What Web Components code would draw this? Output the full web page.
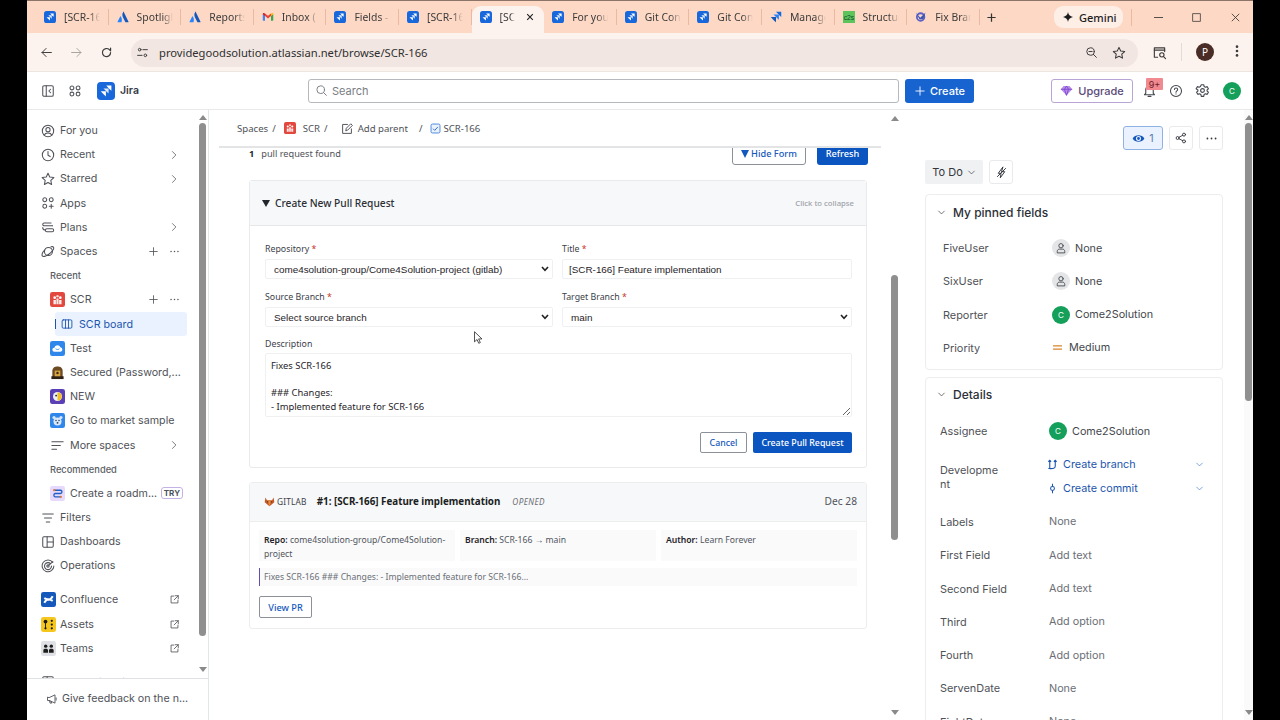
<!DOCTYPE html>
<html lang="en">
<head>
<meta charset="utf-8">
<title>SCR-166</title>
<style>
  html, body { margin: 0; background: #000; overflow: hidden; }
</style>
</head>
<body>
<app-shell>
  <tab-strip>
    <browser-tab icon="jira">[SCR-166</browser-tab>
    <browser-tab icon="atlassian">Spotlight</browser-tab>
    <browser-tab icon="atlassian">Reports</browser-tab>
    <browser-tab icon="gmail">Inbox (</browser-tab>
    <browser-tab icon="jira">Fields -</browser-tab>
    <browser-tab icon="jira">[SCR-166</browser-tab>
    <browser-tab icon="jira" active>[SCR-166</browser-tab>
    <browser-tab icon="jira">For you</browser-tab>
    <browser-tab icon="jira">Git Con</browser-tab>
    <browser-tab icon="jira">Git Con</browser-tab>
    <browser-tab icon="arrows">Manage</browser-tab>
    <browser-tab icon="c2s">Structure</browser-tab>
    <browser-tab icon="fix">Fix Brand</browser-tab>
  </tab-strip>
  <browser-toolbar url="providegoodsolution.atlassian.net/browse/SCR-166"></browser-toolbar>
  <jira-nav></jira-nav>
  <side-nav>
    <nav-item icon="foryou">For you</nav-item>
    <nav-item icon="clock" arrow>Recent</nav-item>
    <nav-item icon="star" arrow>Starred</nav-item>
    <nav-item icon="appsplus">Apps</nav-item>
    <nav-item icon="plans" arrow>Plans</nav-item>
    <nav-item icon="planet" actions>Spaces</nav-item>
    <nav-heading>Recent</nav-heading>
    <nav-item icon="scr" nested actions>SCR</nav-item>
    <nav-item icon="board" board>SCR board</nav-item>
    <nav-item icon="cloud" nested>Test</nav-item>
    <nav-item icon="secured" nested>Secured (Password,...</nav-item>
    <nav-item icon="bird" nested>NEW</nav-item>
    <nav-item icon="bear" nested>Go to market sample</nav-item>
    <nav-item icon="lines" nested arrow>More spaces</nav-item>
    <nav-heading>Recommended</nav-heading>
    <nav-item icon="roadmap" nested try>Create a roadm...</nav-item>
    <nav-item icon="filter">Filters</nav-item>
    <nav-item icon="dash">Dashboards</nav-item>
    <nav-item icon="ops">Operations</nav-item>
    <nav-item icon="confluence" external spaced>Confluence</nav-item>
    <nav-item icon="assets" external>Assets</nav-item>
    <nav-item icon="teams" external>Teams</nav-item>
    <nav-item icon="dash" spaced>Customize sidebar</nav-item>
  </side-nav>
  <issue-main></issue-main>
  <issue-panel></issue-panel>
</app-shell>

<script>
const S = 'fill="none" stroke="currentColor" stroke-width="1.2" stroke-linecap="round" stroke-linejoin="round"';
const ICONS = {
  jira: `<rect width="16" height="16" rx="3.4" fill="#1868db"/><path d="M8.2 3.2h4.600v4.600L11 6.200 8.200 3.200z" fill="#fff"/><path d="M5.800 5.700h4.500v4.600L8.600 8.700 5.800 5.700z" fill="#dbe8fb"/><path d="M3.300 8.200h4.600v4.600L6.100 11.100 3.300 8.200z" fill="#fff"/>`,
  atlassian: `<path d="M8.400 1c-1.700 3-1.600 5.200-.2 8l2.900 5.600c.1.200.3.400.6.400h3.200c.4 0 .6-.4.4-.8L8.900 1c-.1-.3-.4-.3-.5 0z" fill="#1558bc"/><path d="M5 7.200c-.2-.3-.5-.3-.7 0L.7 14.300c-.2.300 0 .7.400.7h4.300c.3 0 .5-.1.6-.4C7 12.700 6.600 9.300 5 7.200z" fill="#2684ff"/>`,
  gmail: `<path d="M1 13V4l3 2v7H2a1 1 0 0 1-1-1z" fill="#4285f4"/><path d="M15 13V4l-3 2v7h2a1 1 0 0 0 1-1z" fill="#34a853"/><path d="M12 3.200 8 6.400 4 3.200v3.600l4 3.100 4-3.100z" fill="#ea4335"/><path d="M1 4.200c0-1.300 1.400-1.900 2.300-1.200L4 3.500v3.300L1 4.400z" fill="#c5221f"/><path d="M15 4.200c0-1.300-1.400-1.900-2.300-1.200l-.7.500v3.300l3-2.400z" fill="#fbbc04"/>`,
  arrows: `<path d="M8 1h7v7l-2.600-2.400L8 1z" fill="#1868db"/><path d="M4.800 4.500h7v7L9 9 4.800 4.500z" fill="#2684ff"/><path d="M1 8h7v7l-2.700-2.500L1 8z" fill="#1558bc"/>`,
  c2s: `<rect width="16" height="16" fill="#5cc45a"/><text x="8" y="11.500" text-anchor="middle" font-size="9" font-family="Liberation Sans, sans-serif" fill="#0b4f2a">c2s</text>`,
  fix: `<circle cx="7.500" cy="8" r="5" fill="none" stroke="#5b5fc7" stroke-width="2.400"/><path d="M1 2l6 7 7-7-3 9H6z" fill="#3b55b5"/>`,
  back: `<path d="M14 8H2.500M7.500 3l-5 5 5 5" ${S}/>`,
  forward: `<path d="M2 8h11.500M8.500 3l5 5-5 5" ${S}/>`,
  reload: `<path d="M13 8a5 5 0 1 1-1.500-3.500L13 6V2.500" fill="none" stroke="currentColor" stroke-width="1.500" stroke-linecap="round" stroke-linejoin="round"/>`,
  tune: `<circle cx="4.500" cy="4.500" r="1.600" ${S}/><path d="M8.500 4.500H14M2 11.500h5.500" ${S}/><circle cx="11.500" cy="11.500" r="1.600" ${S}/>`,
  zoomout: `<circle cx="6.800" cy="6.800" r="4.600" ${S}/><path d="M10.200 10.200 14 14M4.800 6.800h4" ${S}/>`,
  staroutline: `<path d="M8 1.600l1.950 4.150 4.550.55-3.350 3.100.9 4.500L8 11.650 3.950 13.900l.9-4.500L1.500 6.300l4.550-.55z" ${S}/>`,
  lens: `<path d="M6 13H2.500V3h11v4" ${S}/><circle cx="10.500" cy="10.500" r="2.300" ${S}/><path d="M12.300 12.300 14.500 14.500M2.500 5.500h11" ${S}/>`,
  kebab: `<circle cx="8" cy="3" r="1.500" fill="currentColor"/><circle cx="8" cy="8" r="1.500" fill="currentColor"/><circle cx="8" cy="13" r="1.500" fill="currentColor"/>`,
  close: `<path d="M3 3l10 10M13 3 3 13" ${S}/>`,
  closebold: `<path d="M3.500 3.500l9 9M12.500 3.500l-9 9" fill="none" stroke="currentColor" stroke-width="1.800"/>`,
  min: `<path d="M2 8h12" ${S}/>`,
  max: `<rect x="2.500" y="2.500" width="11" height="11" fill="none" stroke="currentColor" stroke-width="1.100"/>`,
  plusbold: `<path d="M8 2v12M2 8h12" fill="none" stroke="currentColor" stroke-width="1.800"/>`,
  spark: `<path d="M8 0c.8 4.500 3 7 8 8-5 1-7.200 3.500-8 8-.8-4.500-3-7-8-8 5-1 7.200-3.500 8-8z" fill="currentColor"/>`,
  panel: `<rect x="2" y="2" width="12" height="12" rx="1.500" ${S}/><path d="M6 2v12M11 6 9 8l2 2" ${S}/>`,
  apps: `<circle cx="4.500" cy="4.500" r="2.200" ${S}/><circle cx="11.500" cy="4.500" r="2.200" ${S}/><circle cx="4.500" cy="11.500" r="2.200" ${S}/><circle cx="11.500" cy="11.500" r="2.200" ${S}/>`,
  search: `<circle cx="7" cy="7" r="4.700" ${S}/><path d="M10.500 10.500 14 14" ${S}/>`,
  plus: `<path d="M8 2.500v11M2.500 8h11" ${S}/>`,
  gem: `<path d="M4.300 2.500h7.400L15 6.500 8 14 1 6.500z" fill="#b58ce8"/><path d="M1 6.500h14M5.500 6.500 8 14l2.500-7.500L8 2.500z" fill="none" stroke="#7b3fd0" stroke-width="1"/>`,
  bell: `<path d="M4 11V7a4 4 0 0 1 8 0v4l1.300 1.500H2.700zM6.500 14.300h3" ${S}/>`,
  help: `<circle cx="8" cy="8" r="6.300" ${S}/><path d="M6.200 6.300c0-2.300 3.700-2.300 3.700 0 0 1.500-1.900 1.500-1.900 3M8 11.300v.1" ${S}/>`,
  gear: `<circle cx="8" cy="8" r="2" ${S}/><path d="M6.700 1.800h2.600l.4 1.900 1.500.8 1.800-.6 1.300 2.300-1.400 1.200v1.200l1.400 1.200-1.300 2.300-1.800-.6-1.500.8-.4 1.900H6.700l-.4-1.900-1.500-.8-1.800.6-1.300-2.300 1.400-1.200V7.400L1.200 6.200l1.300-2.300 1.800.6 1.500-.8z" ${S}/>`,
  foryou: `<circle cx="8" cy="8" r="6.500" ${S}/><circle cx="8" cy="6.500" r="2.400" ${S}/><path d="M3.800 12.600c1.200-3.200 7.200-3.200 8.400 0" ${S}/>`,
  clock: `<circle cx="8" cy="8" r="6.500" ${S}/><path d="M8 4v4.300l2.500 1.500" ${S}/>`,
  star: `<path d="M8 1.500l2 4.300 4.700.6-3.500 3.200.9 4.700L8 12l-4.100 2.300.9-4.700-3.500-3.200 4.700-.6z" ${S}/>`,
  appsplus: `<circle cx="4.300" cy="4.300" r="2.200" ${S}/><circle cx="11.700" cy="4.300" r="2.200" ${S}/><circle cx="4.300" cy="11.700" r="2.200" ${S}/><path d="M11.700 9.500v4.400M9.500 11.700h4.400" ${S}/>`,
  plans: `<path d="M11.500 3.500h-8M13 6.500H3.500a1.500 1.500 0 0 1 0-3" ${S}/><path d="M13 6.500a1.500 1.500 0 0 1 0 0" ${S}/><rect x="5" y="10" width="9.500" height="3.500" rx="1.700" ${S}/><path d="M2 8.500c0 2 1 3 3 3" ${S}/>`,
  planet: `<circle cx="8.500" cy="7.500" r="4.600" ${S}/><path d="M4.500 5.500C2 7.500.5 11 1.500 12.500c1.300 1.600 6-.5 9-3.200 2.800-2.500 4.500-5.600 3.800-6.800-.4-.7-1.500-.8-2.800-.4" ${S}/>`,
  chevright: `<path d="M5.500 2.500 11 8l-5.500 5.500" ${S}/>`,
  chevdown: `<path d="M3 5.500 8 10.500l5-5" ${S}/>`,
  dots: `<circle cx="3" cy="8" r="1.100" fill="currentColor"/><circle cx="8" cy="8" r="1.100" fill="currentColor"/><circle cx="13" cy="8" r="1.100" fill="currentColor"/>`,
  board: `<rect x="1.500" y="2.500" width="13" height="11" rx="1.500" ${S}/><path d="M6 2.500v11M10 2.500v11" ${S}/>`,
  lines: `<path d="M2 4h12M2 8h9M2 12h5" ${S}/>`,
  filter: `<path d="M2 3.500h12M4 8h8M6 12.500h4" ${S}/>`,
  dash: `<rect x="2" y="2" width="12" height="12" rx="1.300" ${S}/><path d="M7 2v12M7 8h7" ${S}/>`,
  ops: `<path d="M13.500 4A6.700 6.700 0 1 0 14.700 8" ${S}/><path d="M11 5.500A4 4 0 1 0 12 8" ${S}/><circle cx="8" cy="8" r="1.300" ${S}/><path d="M9 7l4.500-4" ${S}/>`,
  external: `<path d="M7 3H3v10h10V9M9 2.500h4.500V7M13.500 2.500 7.500 8.500" ${S}/>`,
  megaphone: `<path d="M2 6v4h2.500L12 13.500v-11L4.500 6zM4.500 10l1 3.500h2l-.8-2.500M13.500 6.500v3" ${S}/>`,
  scr: `<rect width="16" height="16" rx="2.500" fill="#e2483d"/><circle cx="5" cy="6" r="1.400" fill="#fff"/><circle cx="11" cy="6" r="1.400" fill="#fff"/><circle cx="8" cy="4.400" r="1.300" fill="#ffd6d0"/><path d="M3.700 13V8.500h2.600V13zM9.700 13V8.500h2.600V13zM6.900 13V7h2.200v6z" fill="#fff" opacity=".9"/>`,
  cloud: `<rect width="16" height="16" rx="2.500" fill="#2f86eb"/><path d="M4.800 11.500a2.200 2.200 0 0 1-.2-4.400 3.400 3.400 0 0 1 6.500-.5 2.500 2.500 0 0 1 .2 4.900z" fill="#fff"/><path d="M6 8.300c1 1 3 1 4 0" fill="none" stroke="#2f86eb"/>`,
  secured: `<path d="M2.500 14V6.500C2.500 3 5 1.500 8 1.500S13.500 3 13.500 6.500V14z" fill="#6b4a24"/><rect x="1.500" y="12" width="13" height="3" fill="#2d2114"/><rect x="5" y="6" width="6" height="6" fill="#d8a640"/><circle cx="8" cy="8.500" r="1.300" fill="#3b2a12"/>`,
  bird: `<rect width="16" height="16" rx="2.500" fill="#5b3fb5"/><circle cx="8" cy="8" r="4.800" fill="#eaf2fd"/><path d="M8 3.500a4.500 4.500 0 0 1 0 9z" fill="#f5c022"/><circle cx="6.500" cy="7" r="1" fill="#223"/>`,
  bear: `<rect width="16" height="16" rx="2.500" fill="#2f86eb"/><circle cx="4.300" cy="4.800" r="1.700" fill="#dbe8fb"/><circle cx="11.700" cy="4.800" r="1.700" fill="#dbe8fb"/><circle cx="8" cy="9" r="4.300" fill="#dbe8fb"/><circle cx="6.400" cy="8" r=".8" fill="#245"/><circle cx="9.600" cy="8" r=".8" fill="#245"/><circle cx="8" cy="10.500" r="1" fill="#245"/>`,
  roadmap: `<rect width="16" height="16" rx="2.500" fill="#e6d9fb"/><path d="M4 4.500h7a1.700 1.700 0 0 1 0 3.500H5.500a1.800 1.800 0 0 0 0 3.500H12" fill="none" stroke="#1f5fc4" stroke-width="1.400"/><circle cx="4.500" cy="4.500" r="1.200" fill="#e8762c"/><circle cx="11.500" cy="11.500" r="1.200" fill="#e8762c"/>`,
  confluence: `<rect width="16" height="16" rx="2.500" fill="#1558bc"/><path d="M3.500 11.500C6 7 8 7 12.500 9.500M12.500 4.500C10 9 8 9 3.500 6.500" fill="none" stroke="#fff" stroke-width="2.200"/>`,
  assets: `<rect width="16" height="16" rx="2.500" fill="#f5c61e"/><circle cx="4.800" cy="4.800" r="2" fill="#1d1d1d"/><circle cx="11.500" cy="4" r="1.200" fill="#1d1d1d"/><circle cx="11.500" cy="8" r="1.200" fill="#1d1d1d"/><circle cx="4.800" cy="12" r="1.200" fill="#1d1d1d"/><circle cx="11.500" cy="12" r="1.200" fill="#1d1d1d"/><path d="M4.800 6v6" stroke="#1d1d1d" stroke-width="1"/>`,
  teams: `<rect width="16" height="16" rx="2.500" fill="#dfe1e6"/><circle cx="5" cy="5.500" r="1.800" fill="#1d1d1d"/><circle cx="11" cy="5.500" r="1.800" fill="#1d1d1d"/><path d="M2.500 12.500V10c0-1.200 1-1.700 2.500-1.700S7.500 8.800 7.500 10v2.500zM8.500 12.500V10c0-1.200 1-1.700 2.500-1.700s2.500.5 2.500 1.700v2.500z" fill="#1d1d1d"/>`,
  edit: `<path d="M12.800 8.500V14H2V3h6M6 10.500l.5-2.800L12 2.200l2 2-5.500 5.500z" ${S}/>`,
  check: `<rect x="1.500" y="1.500" width="13" height="13" rx="2" fill="#eaf2fd" stroke="#3f7fdc" stroke-width="1.300"/><path d="M4.500 8.300l2.400 2.400 4.500-5" fill="none" stroke="#2a5fb8" stroke-width="1.300"/>`,
  eye: `<path d="M.8 8C3.500 2.800 12.500 2.800 15.200 8 12.500 13.200 3.500 13.200.8 8z" fill="#1558bc"/><circle cx="8" cy="8" r="3.100" fill="#eaf2fd"/><circle cx="8" cy="8" r="1.700" fill="#1558bc"/>`,
  share: `<circle cx="3.500" cy="8" r="2" ${S}/><circle cx="12" cy="3.500" r="2" ${S}/><circle cx="12" cy="12.500" r="2" ${S}/><path d="M5.300 7l5-2.600M5.300 9l5 2.600" ${S}/>`,
  bolt: `<path d="M9.500 1.500 4 9h3.500l-1 5.500L12 7H8.500zM3 13 13 3" ${S}/>`,
  person: `<circle cx="8" cy="5" r="2.900" ${S}/><path d="M3 14v-1.500C3 10.500 4.500 9.500 6 9.500h4c1.500 0 3 1 3 3V14z" ${S}/>`,
  medium: `<path d="M1.500 5.500h13M1.500 10.500h13" fill="none" stroke="#d9852c" stroke-width="1.800"/>`,
  branch: `<path d="M4 2v11M4 14c4 0 8 .5 8-4V2M2 4 4 2l2 2M10 4l2-2 2 2M2 13.800h4" fill="none" stroke="currentColor" stroke-width="1.600"/>`,
  commit: `<circle cx="8" cy="8" r="2.800" fill="none" stroke="currentColor" stroke-width="1.500"/><path d="M8 1v4.200M8 10.800V15" fill="none" stroke="currentColor" stroke-width="1.500"/>`,
  fox: `<path d="M2 2l2.300 4h7.400L14 2l1 7-7 6-7-6z" fill="#c2592b"/><path d="M5 6h6l-3 9z" fill="#e78b3d"/><circle cx="5.500" cy="8.500" r=".9" fill="#321"/><circle cx="10.500" cy="8.500" r=".9" fill="#321"/>`,
  cursor: `<path d="M1 1v14l3.500-3.200 2.300 5.200 2.200-1-2.300-5h4.600z" fill="#fff" stroke="#111" stroke-width="1"/>`
};

class ShadowEl extends HTMLElement {
  connectedCallback() {
    if (this.shadowRoot) return;
    this.attachShadow({ mode: "open" }).innerHTML = this.render();
  }
  attr(name, fallback = "") {
    return this.hasAttribute(name) ? this.getAttribute(name) : fallback;
  }
}

class AppIcon extends ShadowEl {
  render() {
    const size = this.attr("size", "16");
    const box = this.attr("name") === "cursor" ? "0 0 13 18" : "0 0 16 16";
    return `<style>:host{display:inline-flex;flex:none;width:${size}px;height:${size}px}svg{width:100%;height:100%;display:block}</style>
      <svg viewBox="${box}" aria-hidden="true">${ICONS[this.attr("name")] || ""}</svg>`;
  }
}

class AppShell extends ShadowEl {
  render() {
    return `<style>
      :host{display:block;width:1280px;height:720px;overflow:hidden;background:#000;padding:0 27px;box-sizing:border-box}
      .win{height:720px;display:grid;grid-template-columns:182px 691px 353px;grid-template-rows:33px 39px 38px 610px;background:#fff;font-family:Inter,"Noto Sans",sans-serif}
      ::slotted(tab-strip),::slotted(browser-toolbar),::slotted(jira-nav){grid-column:1/-1}
    </style><div class="win"><slot></slot></div>`;
  }
}

class TabStrip extends ShadowEl {
  render() {
    return `<style>
      :host{display:flex;height:33px;box-sizing:border-box;background:#fdd8c5;border-top:1px solid #8d7468;font:10.400px "Noto Sans",sans-serif;color:#3a3a3a}
      .tabs{display:flex;margin-left:9px}
      .plus{width:24px;display:flex;align-items:center;justify-content:center;color:#333}
      .right{margin-left:auto;margin-right:-2px;display:flex;align-items:center}
      .gem{display:flex;align-items:center;gap:6px;width:69px;height:22px;box-sizing:border-box;padding-left:9px;border-radius:9px;background:#fdeee6;font-weight:500;color:#1c1c1c;margin-right:8px;font-size:11px}
      .sep{width:1px;height:17px;background:#e9b9a2;margin-right:7px}
      .ctl{width:38.700px;display:flex;justify-content:center;color:#333}
    </style>
    <div class="tabs"><slot></slot></div>
    <div class="plus"><app-icon name="plusbold" size="11"></app-icon></div>
    <div class="right">
      <div class="gem"><app-icon name="spark" size="10"></app-icon>Gemini</div><div class="sep"></div>
      <div class="ctl"><app-icon name="min" size="11"></app-icon></div>
      <div class="ctl"><app-icon name="max" size="11"></app-icon></div>
      <div class="ctl"><app-icon name="close" size="11"></app-icon></div>
    </div>`;
  }
}

class BrowserTab extends ShadowEl {
  render() {
    const active = this.hasAttribute("active");
    const mask = "linear-gradient(90deg,#000 70%,transparent)";
    return `<style>
      :host{display:flex;width:72.600px;height:32px;box-sizing:border-box;align-items:center;padding-left:8px;position:relative}
      .ic{display:inline-flex;margin-right:8px}
      .t{overflow:hidden;white-space:nowrap;width:${active ? 15 : 36}px;-webkit-mask-image:${mask};mask-image:${mask}}
      .bar{position:absolute;right:0;top:8px;bottom:8px;width:1px;background:#e9b9a2}
      .on{position:absolute;inset:5px 0 0 0;background:#fdf3ee;border-radius:9px 9px 0 0;z-index:0}
      .ic,.t,.x{position:relative;z-index:1}
      .x{margin-left:10px;display:inline-flex;color:#222}
    </style>
    ${active ? `<div class="on"></div>` : `<div class="bar"></div>`}
    <span class="ic"><app-icon name="${this.attr("icon")}" size="12"></app-icon></span>
    <span class="t"><slot></slot></span>
    ${active ? `<span class="x"><app-icon name="closebold" size="10"></app-icon></span>` : ""}`;
  }
}

class BrowserToolbar extends ShadowEl {
  render() {
    return `<style>
      :host{display:flex;align-items:center;height:39px;background:#fdf3ee;color:#3b3b3b;border-bottom:1px solid #ece6e2;box-sizing:border-box}
      .nav{display:flex;margin-left:4px;width:100px}
      .nav span{width:30px;display:flex;justify-content:center}
      .addr{flex:none;width:1007px;height:28px;display:flex;align-items:center;border-radius:14px;background:#f2e6e2;box-sizing:border-box;padding:0 12px 0 5px;margin-top:1px}
      .url{margin-left:10px;font:11.200px "Noto Sans",sans-serif;color:#2f2f2f}
      .end{margin-left:auto;display:flex;align-items:center;gap:14px}
      .tail{display:flex;align-items:center;margin-left:14px}
      .vr{width:1px;height:18px;background:#e6dad4;margin:0 14px}
      .av{width:18px;height:18px;border-radius:50%;background:#4a2c26;color:#fff;font:10px "Noto Sans",sans-serif;display:flex;align-items:center;justify-content:center}
      .kb{margin-left:16px}
    </style>
    <div class="nav">
      <span><app-icon name="back" size="13"></app-icon></span>
      <span style="color:#a9a29d"><app-icon name="forward" size="13"></app-icon></span>
      <span><app-icon name="reload" size="13"></app-icon></span>
    </div>
    <div class="addr">
      <app-icon name="tune" size="13"></app-icon>
      <span class="url">${this.attr("url")}</span>
      <span class="end"><app-icon name="zoomout" size="13"></app-icon><app-icon name="staroutline" size="14"></app-icon></span>
    </div>
    <div class="tail">
      <app-icon name="lens" size="15"></app-icon><span class="vr"></span>
      <span class="av">P</span><span class="kb"><app-icon name="kebab" size="14"></app-icon></span>
    </div>`;
  }
}

class JiraNav extends ShadowEl {
  render() {
    return `<style>
      :host{display:flex;align-items:center;height:38px;background:#fff;border-bottom:1px solid #e8e9eb;box-sizing:border-box;position:relative;color:#505258;font:11px Inter,sans-serif}
      .l{display:flex;align-items:center;width:281px;padding-left:14px;box-sizing:border-box;gap:13px}
      .logo{display:flex;align-items:center;gap:5px;font-weight:600;color:#333a46;font-size:10.500px;margin-left:2px}
      .search{width:591px;height:24px;box-sizing:border-box;border:1px solid #b5b8bd;border-radius:3px;display:flex;align-items:center;gap:4px;padding:0 6px;color:#7a7d84;font-size:11px}
      .create{width:69px;height:24px;margin-left:6px;border-radius:3px;background:#1763d0;color:#fff;display:flex;align-items:center;justify-content:center;gap:4px;font-weight:500}
      .up{width:82px;height:24px;margin-left:77px;box-sizing:border-box;border:1px solid #b9a4d6;border-radius:3px;display:flex;align-items:center;justify-content:center;gap:5px;color:#5a4a78;font-weight:500}
      .ic{display:flex;align-items:center;margin-left:9px;gap:12px;color:#44484f}
      .av{width:18px;height:18px;border-radius:50%;background:#149f5b;color:#fff;display:flex;align-items:center;justify-content:center;font-size:8px;margin-left:1px}
      .badge{position:absolute;left:1119px;top:6px;width:17px;height:12px;background:#f08a90;color:#712127;font-size:9px;display:flex;align-items:center;justify-content:center;border-radius:1px}
    </style>
    <div class="l">
      <app-icon name="panel" size="14"></app-icon>
      <app-icon name="apps" size="14"></app-icon>
      <span class="logo"><app-icon name="jira" size="18"></app-icon>Jira</span>
    </div>
    <div class="search"><app-icon name="search" size="13"></app-icon>Search</div>
    <div class="create"><app-icon name="plus" size="12"></app-icon>Create</div>
    <div class="up"><app-icon name="gem" size="13"></app-icon>Upgrade</div>
    <div class="ic">
      <app-icon name="bell" size="15"></app-icon>
      <app-icon name="help" size="14"></app-icon>
      <app-icon name="gear" size="15"></app-icon>
      <span class="av">C</span>
    </div>
    <span class="badge">9+</span>`;
  }
}

class FakeScrollbar extends ShadowEl {
  render() {
    return `<style>
      :host{display:flex;flex-direction:column;align-items:center;flex:none;width:9px;box-sizing:border-box;height:100%}
      .a{width:0;height:0;border-left:4px solid transparent;border-right:4px solid transparent;flex:none}
      .up{border-bottom:5px solid #8a8a8a;margin-top:${this.attr("arrow", "5")}px}
      .dn{border-top:5px solid #8a8a8a;margin-top:auto;margin-bottom:${this.attr("end", "5")}px}
      .t{width:7px;flex:none;border-radius:4px;background:#8f8f8f;margin-top:${this.attr("top")}px;height:${this.attr("size")}px}
    </style><div class="a up"></div><div class="t"></div><div class="a dn"></div>`;
  }
}

class SideNav extends ShadowEl {
  render() {
    return `<style>
      :host{display:flex;flex-direction:column;width:182px;height:610px;box-sizing:border-box;border-right:1px solid #e4e5e7;background:#fff;font:10.700px Inter,sans-serif;color:#505258}
      .top{display:flex;height:568px;overflow:hidden;flex:none}
      .list{width:171px;flex:none;padding-top:8.500px;box-sizing:border-box}
      .sb{margin-top:2px;height:565px}
      .foot{height:42px;flex:none;box-sizing:border-box;border-top:1px solid #dfe1e4;display:flex;align-items:center;padding:0 0 2px 19px;gap:4px;white-space:nowrap;overflow:hidden}
    </style>
    <div class="top">
      <div class="list"><slot></slot></div>
      <fake-scrollbar class="sb" arrow="3" top="3" size="513" end="5"></fake-scrollbar>
    </div>
    <div class="foot"><app-icon name="megaphone" size="12"></app-icon>Give feedback on the n...</div>`;
  }
}

class NavItem extends ShadowEl {
  render() {
    const nested = this.hasAttribute("nested");
    const board = this.hasAttribute("board");
    const logo = ["confluence", "assets", "teams"].includes(this.attr("icon"));
    const size = board ? 12 : nested || logo ? 15 : 14;
    const pad = board ? 34 : nested ? 23 : 14;
    const end = [];
    if (this.hasAttribute("arrow")) end.push(`<span class="e"><app-icon name="chevright" size="10"></app-icon></span>`);
    if (this.hasAttribute("actions")) end.push(`<span class="e p"><app-icon name="plus" size="11"></app-icon></span><span class="e"><app-icon name="dots" size="11"></app-icon></span>`);
    if (this.hasAttribute("external")) end.push(`<span class="e"><app-icon name="external" size="11"></app-icon></span>`);
    if (this.hasAttribute("try")) end.push(`<span class="try">TRY</span>`);
    return `<style>
      :host{display:flex;align-items:center;height:24.200px;box-sizing:border-box;padding-left:${pad}px;padding-right:18px;position:relative;${this.hasAttribute("spaced") ? "margin-top:9.800px;" : ""}${board ? "color:#1c55ae;" : ""}}
      .lab{margin-left:${board ? 6 : nested ? 5 : logo ? 4 : 5}px;white-space:nowrap;flex:none}
      .end{margin-left:auto;display:flex;align-items:center}
      .e{display:flex;width:12px;justify-content:center}
      .p{margin-right:9px}
      .try{font-size:8px;font-weight:700;border:1px solid #c4b1e6;border-radius:3px;padding:0 2px;color:#4a4f5a;margin-right:-3px;line-height:10px}
      .bg{position:absolute;left:28px;right:11px;top:0;bottom:0;background:#e9f2fe;border-radius:3px;z-index:0}
      .tick{position:absolute;left:28px;top:7px;height:10px;width:1px;background:#1c55ae}
      app-icon,.lab{position:relative;z-index:1}
    </style>
    ${board ? `<div class="bg"></div><div class="tick"></div>` : ""}
    <app-icon name="${this.attr("icon")}" size="${size}"></app-icon>
    <span class="lab"><slot></slot></span>
    <span class="end">${end.join("")}</span>`;
  }
}

class NavHeading extends ShadowEl {
  render() {
    return `<style>:host{display:flex;align-items:center;height:24.200px;padding-left:23px;font-size:9.300px;font-weight:500;color:#5a5d64}</style><slot></slot>`;
  }
}

class IssueMain extends ShadowEl {
  render() {
    return `<style>
      :host{display:flex;width:691px;height:610px;position:relative;overflow:hidden;font:9.600px "Noto Sans",sans-serif;color:#505258}
      .col{width:681px;flex:none;display:flex;flex-direction:column;height:610px}
      .crumb{height:38px;flex:none;box-sizing:border-box;margin:0 9px 0 10px;border-bottom:2px solid #e3e4e6;display:flex;align-items:center;padding-left:18px;position:relative;z-index:1;background:#fff}
      .crumb span{white-space:nowrap}
      .crumb app-icon{margin-right:4px}
      .scroll{flex:1;padding:0 22px 0 40px}
      .head{display:flex;height:26px;margin-top:-9px;font-size:9.200px}
      .head .found{line-height:10px;margin-top:10px}
      .num{font-weight:700;color:#22272b;margin-right:7px}
      .hide{margin-left:auto;width:74px;height:26px;box-sizing:border-box;border:1px solid #8c9199;border-radius:3px;display:flex;align-items:center;justify-content:center;gap:2px;color:#1558bc;font-weight:500;padding-top:3px}
      .tri{width:0;height:0;border-left:4px solid transparent;border-right:4px solid transparent;border-top:8px solid #1558bc}
      .ref{margin-left:11px;width:51px;height:26px;box-sizing:border-box;background:#0b55c0;color:#fff;font-weight:500;border-radius:3px;display:flex;align-items:center;justify-content:center;padding-top:3px}
      pr-form{margin-top:15px}
      pr-card{margin-top:14px}
      .cursor{position:absolute;left:263px;top:221px;z-index:3}
    </style>
    <div class="col">
      <div class="crumb">
        <span>Spaces</span><span style="margin:0 8px 0 4px">/</span>
        <app-icon name="scr" size="12" style="margin:0 7px 0 0"></app-icon><span>SCR</span><span style="margin:0 13px 0 4px">/</span>
        <app-icon name="edit" size="13"></app-icon><span>Add parent</span><span style="margin:0 7px 0 11px">/</span>
        <app-icon name="check" size="11" style="margin-right:3px"></app-icon><span>SCR-166</span>
      </div>
      <div class="scroll">
        <div class="head"><span class="found num">1</span><span class="found">pull request found</span>
          <span class="hide"><span class="tri"></span>Hide Form</span><span class="ref">Refresh</span></div>
        <pr-form></pr-form>
        <pr-card></pr-card>
      </div>
    </div>
    <fake-scrollbar arrow="6" top="154" size="265" end="5"></fake-scrollbar>
    <app-icon class="cursor" name="cursor" size="13"></app-icon>`;
  }
}

class PrForm extends ShadowEl {
  render() {
    const chevron = "data:image/svg+xml,%3Csvg xmlns='http://www.w3.org/2000/svg' width='8' height='6'%3E%3Cpath d='M1 1l3 3.300L7 1' fill='none' stroke='%23222' stroke-width='1.600'/%3E%3C/svg%3E";
    const field = "box-sizing:border-box;width:100%;background:#fff;border:1px solid #eef0f2;border-radius:2px;font:9.900px 'Liberation Sans',sans-serif;color:#1f2328;outline:none";
    return `<style>
      :host{display:block;width:618px;height:288px;box-sizing:border-box;border:1px solid #e9eaec;border-radius:3px;background:#fff}
      .h{height:45px;box-sizing:border-box;background:#f7f8f9;border-bottom:1px solid #e6e7e9;display:flex;align-items:center;padding:0 12px;color:#2a2f36;font-size:10.200px;font-weight:500}
      .h i{width:0;height:0;border-left:4px solid transparent;border-right:4px solid transparent;border-top:7px solid #22272b;margin-right:5px}
      .h em{margin-left:auto;font-style:normal;font-size:7.700px;color:#9ea2a9}
      .g{display:grid;grid-template-columns:288px 290px;column-gap:9px;row-gap:12px;padding:17px 0 0 15px}
      label{display:block;font-size:8.800px;color:#3c4148;height:12px;line-height:12px;margin-bottom:4px}
      label b{color:#c9372c;font-weight:400}
      select,input{${field};height:20px}
      select{appearance:none;-webkit-appearance:none;padding:0 18px 0 8px;background:#fff url("${chevron}") no-repeat right 3px center}
      input{padding:0 6px}
      textarea{${field};display:block;width:587px;height:64px;resize:vertical;padding:5px 5px;font:9.400px/13.500px "Noto Sans",sans-serif;overflow:hidden}
      .d{padding:11px 0 0 15px}
      .d label{margin-bottom:3px}
      .b{display:flex;justify-content:flex-end;gap:6px;padding:15px 14px 0 0}
      .c,.p{height:21px;box-sizing:border-box;border-radius:2px;display:flex;align-items:center;justify-content:center;font-weight:500;font-size:8.800px}
      .c{width:47px;border:1px solid #8c9199;color:#1558bc}
      .p{width:99px;background:#0b55c0;color:#fff}
    </style>
    <div class="h"><i></i>Create New Pull Request<em>Click to collapse</em></div>
    <div class="g">
      <div><label>Repository <b>*</b></label><select><option>come4solution-group/Come4Solution-project (gitlab)</option></select></div>
      <div><label>Title <b>*</b></label><input value="[SCR-166] Feature implementation"></div>
      <div><label>Source Branch <b>*</b></label><select><option>Select source branch</option></select></div>
      <div><label>Target Branch <b>*</b></label><select><option>main</option></select></div>
    </div>
    <div class="d"><label>Description</label><textarea>Fixes SCR-166

### Changes:
- Implemented feature for SCR-166</textarea></div>
    <div class="b"><span class="c">Cancel</span><span class="p">Create Pull Request</span></div>`;
  }
}

class PrCard extends ShadowEl {
  render() {
    return `<style>
      :host{display:block;width:618px;height:147px;box-sizing:border-box;border:1px solid #eceded;border-radius:3px;background:#fff;font-size:8.650px;color:#50555c}
      .h{height:39px;box-sizing:border-box;background:#f7f8f9;border-bottom:1px solid #eceded;display:flex;align-items:center;padding:0 9px 2px 14px}
      .src{display:flex;align-items:center;gap:2px;font-size:8.300px;letter-spacing:.2px;color:#3c4148;margin-right:10px}
      .t{font-size:9.800px;font-weight:700;color:#1a1d21}
      .st{margin-left:12px;font-size:8.200px;font-style:italic;letter-spacing:.4px;color:#6b6f76}
      .dt{margin-left:auto;font-size:10.200px}
      .info{display:grid;grid-template-columns:repeat(3,196px);gap:5px;padding:8px 0 0 9px}
      .info div{height:31px;background:#fafafb;box-sizing:border-box;padding:3px 5px;line-height:14px}
      .info span{display:block}
      b{color:#1f2328;font-weight:600}
      .pre{margin:7px 9px 0;height:18px;background:#fafafb;border-left:1px solid #5e4db2;display:flex;align-items:center;padding-left:4px;color:#6b6f76}
      .v{margin:10px 0 0 9px;width:53px;height:22px;box-sizing:border-box;border:1px solid #8c9199;border-radius:2px;color:#1558bc;font-weight:500;font-size:9.200px;display:flex;align-items:center;justify-content:center}
    </style>
    <div class="h">
      <span class="src"><app-icon name="fox" size="11"></app-icon>GITLAB</span>
      <span class="t">#1: [SCR-166] Feature implementation</span>
      <span class="st">OPENED</span>
      <span class="dt">Dec 28</span>
    </div>
    <div class="info">
      <div><span><b>Repo:</b> come4solution-group/Come4Solution-</span><span>project</span></div>
      <div><b>Branch:</b> SCR-166 → main</div>
      <div><b>Author:</b> Learn Forever</div>
    </div>
    <div class="pre">Fixes SCR-166 ### Changes: - Implemented feature for SCR-166...</div>
    <div class="v">View PR</div>`;
  }
}

class FieldRow extends ShadowEl {
  render() {
    const kind = this.attr("kind");
    let value = `<slot></slot>`;
    if (kind === "user") value = `<span class="blank"><app-icon name="person" size="12"></app-icon></span><span class="txt"><slot></slot></span>`;
    if (kind === "avatar") value = `<span class="av">C</span><span class="txt"><slot></slot></span>`;
    if (kind === "priority") value = `<app-icon name="medium" size="11"></app-icon><span class="pr"><slot></slot></span>`;
    return `<style>
      :host{display:flex;align-items:center;height:33.300px;font-size:10.900px;color:#505258}
      .k{width:109px;flex:none}
      .v{display:flex;align-items:center;font-size:10.800px;${kind === "muted" ? "color:#6b6e76;" : "color:#44474d;"}}
      .blank,.av{width:18px;height:18px;border-radius:50%;display:flex;align-items:center;justify-content:center;flex:none}
      .blank{background:#e4e5e7;color:#44474d}
      .av{background:#149f5b;color:#fff;font-size:8px}
      .txt{margin-left:5px}
      .pr{margin-left:6px}
    </style><span class="k">${this.attr("label")}</span><span class="v">${value}</span>`;
  }
}

class DevRow extends ShadowEl {
  render() {
    return `<style>
      :host{display:flex;height:57.700px;font-size:10.900px;color:#505258;align-items:center}
      .k{width:60px;margin-right:49px;line-height:14px;flex:none;word-break:break-all}
      .links{flex:1;color:#1c55ae;font-size:10.800px}
      .l{height:24px;display:flex;align-items:center;gap:5px;margin-left:-2px}
      .c{margin-left:auto;color:#3f78cf;display:flex}
    </style>
    <span class="k">Development</span>
    <div class="links">
      <div class="l"><app-icon name="branch" size="11"></app-icon>Create branch<span class="c"><app-icon name="chevdown" size="9"></app-icon></span></div>
      <div class="l"><app-icon name="commit" size="11"></app-icon>Create commit<span class="c"><app-icon name="chevdown" size="9"></app-icon></span></div>
    </div>`;
  }
}

class SideCard extends ShadowEl {
  render() {
    return `<style>
      :host{display:block;width:298px;box-sizing:border-box;border:1px solid #eceded;border-radius:4px;padding:0 18px 0 ${this.attr("pad", "17")}px}
      .h{height:34px;display:flex;align-items:center;font-size:12px;font-weight:500;color:#2c3038;margin-left:-${Number(this.attr("pad", "17")) - 11}px;gap:7px;margin-bottom:2.400px}
    </style><div class="h"><app-icon name="chevdown" size="9"></app-icon>${this.attr("title")}</div><slot></slot>`;
  }
}

class IssuePanel extends ShadowEl {
  render() {
    return `<style>
      :host{display:flex;width:353px;height:610px;overflow:hidden;font-family:Inter,sans-serif;font-size:10.800px;color:#505258}
      .c{width:344px;flex:none;padding-left:25px;box-sizing:border-box}
      .act{display:flex;justify-content:flex-end;gap:6px;width:298px;padding-top:16px}
      .btn{height:24px;width:24px;box-sizing:border-box;border:1px solid #e9eaec;border-radius:3px;display:flex;align-items:center;justify-content:center;color:#33373d}
      .w{width:40px;background:#e9f2fe;border-color:#8fb2e3;color:#5f7fae;gap:4px}
      .st{display:flex;gap:6px;margin:10px 0 10px}
      .todo{width:58px;height:24px;background:#f0f1f2;display:flex;align-items:center;justify-content:center;gap:4px;color:#33373d;border-radius:2px;font-size:11px}
      .second{margin-top:7px;height:400px}
      .sb{background:#fafafa;width:9px;height:610px}
    </style>
    <div class="c">
      <div class="act">
        <span class="btn w"><app-icon name="eye" size="13"></app-icon>1</span>
        <span class="btn"><app-icon name="share" size="12"></app-icon></span>
        <span class="btn"><app-icon name="dots" size="13"></app-icon></span>
      </div>
      <div class="st">
        <span class="todo">To Do <app-icon name="chevdown" size="9"></app-icon></span>
        <span class="btn"><app-icon name="bolt" size="13"></app-icon></span>
      </div>
      <side-card title="My pinned fields" pad="17">
        <field-row label="FiveUser" kind="user">None</field-row>
        <field-row label="SixUser" kind="user">None</field-row>
        <field-row label="Reporter" kind="avatar">Come2Solution</field-row>
        <field-row label="Priority" kind="priority">Medium</field-row>
        <div style="height:4.400px"></div>
      </side-card>
      <side-card class="second" title="Details" pad="14">
        <field-row label="Assignee" kind="avatar">Come2Solution</field-row>
        <dev-row></dev-row>
        <field-row label="Labels" kind="muted">None</field-row>
        <field-row label="First Field" kind="muted">Add text</field-row>
        <field-row label="Second Field" kind="muted">Add text</field-row>
        <field-row label="Third" kind="muted">Add option</field-row>
        <field-row label="Fourth" kind="muted">Add option</field-row>
        <field-row label="ServenDate" kind="muted">None</field-row>
        <field-row label="EightDate" kind="muted">None</field-row>
      </side-card>
    </div>
    <fake-scrollbar class="sb" arrow="5" top="3" size="278" end="5"></fake-scrollbar>`;
  }
}

const elements = {
  "app-icon": AppIcon, "app-shell": AppShell, "tab-strip": TabStrip, "browser-tab": BrowserTab,
  "browser-toolbar": BrowserToolbar, "jira-nav": JiraNav, "fake-scrollbar": FakeScrollbar,
  "side-nav": SideNav, "nav-item": NavItem, "nav-heading": NavHeading, "issue-main": IssueMain,
  "pr-form": PrForm, "pr-card": PrCard, "field-row": FieldRow, "dev-row": DevRow,
  "side-card": SideCard, "issue-panel": IssuePanel
};
Object.entries(elements).forEach(([name, cls]) => customElements.define(name, cls));
</script>
</body>
</html>
